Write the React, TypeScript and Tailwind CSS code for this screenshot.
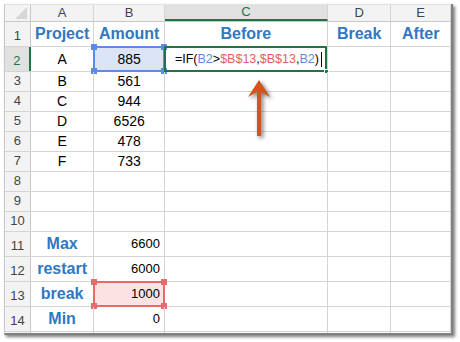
import React from "react";

const cols = [26, 64, 71, 164, 64, 60];
const rowHeights = [25, 25, 20, 20, 20, 20, 20, 20, 20, 20, 25, 25, 25, 25, 25];

type Cell = { text?: React.ReactNode; kind?: "head" | "plain" | "num" };

const rows: Cell[][] = [
  [{ text: "Project", kind: "head" }, { text: "Amount", kind: "head" }, { text: "Before", kind: "head" }, { text: "Break", kind: "head" }, { text: "After", kind: "head" }],
  [{ text: "A" }, { text: "885" }, {}, {}, {}],
  [{ text: "B" }, { text: "561" }, {}, {}, {}],
  [{ text: "C" }, { text: "944" }, {}, {}, {}],
  [{ text: "D" }, { text: "6526" }, {}, {}, {}],
  [{ text: "E" }, { text: "478" }, {}, {}, {}],
  [{ text: "F" }, { text: "733" }, {}, {}, {}],
  [{}, {}, {}, {}, {}],
  [{}, {}, {}, {}, {}],
  [{}, {}, {}, {}, {}],
  [{ text: "Max", kind: "head" }, { text: "6600", kind: "num" }, {}, {}, {}],
  [{ text: "restart", kind: "head" }, { text: "6000", kind: "num" }, {}, {}, {}],
  [{ text: "break", kind: "head" }, { text: "1000", kind: "num" }, {}, {}, {}],
  [{ text: "Min", kind: "head" }, { text: "0", kind: "num" }, {}, {}, {}],
  [{}, {}, {}, {}, {}],
];

function Handles({ color }: { color: string }) {
  const cls = "absolute w-[6px] h-[6px] " + color;
  return (
    <>
      <div className={cls + " -left-[4px] -top-[4px]"} />
      <div className={cls + " -right-[4px] -top-[4px]"} />
      <div className={cls + " -left-[4px] -bottom-[4px]"} />
      <div className={cls + " -right-[4px] -bottom-[4px]"} />
    </>
  );
}

function Formula() {
  return (
    <span className="text-[12.5px] text-black whitespace-nowrap">
      =IF(<span className="text-[#5b8be6]">B2</span>&gt;<span className="text-[#ec5a5f]">$B$13</span>,<span className="text-[#ec5a5f]">$B$13</span>,<span className="text-[#5b8be6]">B2</span>)
      <span className="inline-block w-px h-[15px] bg-black align-middle ml-[2px]" />
    </span>
  );
}

export default function App() {
  const letters = ["A", "B", "C", "D", "E"];
  return (
    <div className="w-[460px] h-[342px] bg-white pl-[4px] pt-[4px]" style={{ fontFamily: '"Liberation Sans", Arial, sans-serif' }}>
      <div className="relative w-[449px] h-[331px] overflow-hidden border-r-2 border-b-2 border-[#808080] shadow-[2px_2px_3px_rgba(0,0,0,0.5)] border-l border-l-[#c8c8c8] bg-white">
        {/* column headers */}
        <div className="flex h-[18px] bg-[#f3f3f3] border-b border-[#c8c8c8] border-t border-t-[#e2e2e2]">
          <div className="relative border-r border-[#c8c8c8]" style={{ width: cols[0] }}>
            <svg className="absolute right-[3px] bottom-[2px]" width="12" height="12" viewBox="0 0 12 12">
              <polygon points="12,0 12,12 0,12" fill="#d6d6d6" />
            </svg>
          </div>
          {letters.map((l, i) => (
            <div
              key={l}
              className={
                "flex items-center justify-center text-[13px] border-r border-[#d4d4d4] " +
                (l === "C" ? "bg-[#e1e1e1] text-[#217346] border-b-2 border-b-[#217346]" : "text-[#444]")
              }
              style={{ width: cols[i + 1] }}
            >
              {l}
            </div>
          ))}
        </div>

        {rows.map((r, ri) => (
          <div key={ri} className="flex border-b border-[#d4d4d4]" style={{ height: rowHeights[ri] }}>
            <div
              className={
                "flex items-end justify-center pb-[1px] text-[13px] " +
                (ri === 1 ? "bg-[#e1e1e1] text-[#217346] border-r-2 border-[#217346]" : "bg-[#f3f3f3] text-[#444] border-r border-[#c8c8c8]")
              }
              style={{ width: cols[0] }}
            >
              {ri < 14 ? ri + 1 : ""}
            </div>
            {r.map((c, ci) => {
              const isB2 = ri === 1 && ci === 1;
              const isC2 = ri === 1 && ci === 2;
              const isB13 = ri === 12 && ci === 1;
              let align = "justify-center";
              if (c.kind === "num") align = "justify-end pr-[4px]";
              let textCls = "text-[14px] text-black";
              if (c.kind === "head") textCls = "text-[16px] font-bold text-[#2f78c4]";
              if (c.kind === "num") textCls = "text-[13px] text-black";
              return (
                <div
                  key={ci}
                  className={"relative flex items-center border-r border-[#d4d4d4] " + align + " " + textCls}
                  style={{ width: cols[ci + 1] }}
                >
                  {isB2 && (
                    <div className="absolute -left-px -top-px -right-px -bottom-px border-2 border-[#5b8be6] bg-[#dce5f8]">
                      <Handles color="bg-[#5b8be6]" />
                    </div>
                  )}
                  {isB13 && (
                    <div className="absolute -left-px -top-px -right-px -bottom-px border-2 border-[#e86a6a] bg-[#fce3e3]">
                      <Handles color="bg-[#e86a6a]" />
                    </div>
                  )}
                  {isC2 && (
                    <div className="absolute -left-px -top-px right-0 -bottom-px border-2 border-[#217346]">
                      <div className="absolute -right-[4px] -bottom-[4px] w-[5px] h-[5px] bg-[#217346] border border-white" />
                    </div>
                  )}
                  {isC2 ? (
                    <div className="relative w-full pl-[10px] flex items-center">
                      <Formula />
                    </div>
                  ) : (
                    <span className="relative">{c.text}</span>
                  )}
                </div>
              );
            })}
          </div>
        ))}

        {/* arrow */}
        <svg
          className="absolute left-[242px] top-[75px]"
          width="28"
          height="62"
          viewBox="0 0 28 62"
          style={{ filter: "drop-shadow(2px 2px 2px rgba(0,0,0,0.55))" }}
        >
          <polygon points="12,1 23,18 14,13 14,57 10,57 10,13 1,18" fill="#d4541a" />
        </svg>
      </div>
    </div>
  );
}
